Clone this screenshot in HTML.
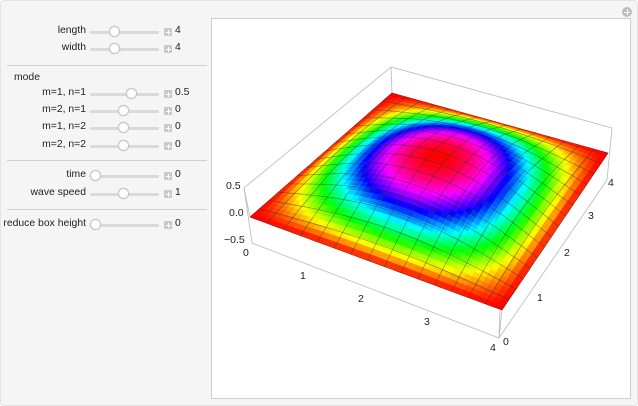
<!DOCTYPE html>
<html><head><meta charset="utf-8"><style>
body{margin:0;width:638px;height:406px;background:#fff;font-family:"Liberation Sans",Arial,sans-serif;font-size:10.4px;color:#222;overflow:hidden;position:relative}
.frame{position:absolute;left:0;top:0;width:636px;height:404px;background:#f5f5f5;border:1px solid #e4e4e4;border-radius:4px}
.plot{position:absolute;left:211px;top:18px;width:418px;height:379px;background:#fff;border:1px solid #cfcfcf}
.row{position:absolute;left:0;height:14px;width:210px}
.lab{position:absolute;right:124px;top:0;white-space:nowrap}
.trk{position:absolute;left:90px;top:6px;width:69px;height:3px;background:#dadada;border-radius:2px}
.knob{position:absolute;top:1px;width:11px;height:11px;border-radius:50%;background:#fff;border:1px solid #c6c6c6;box-sizing:border-box;box-shadow:0 0 1px #bbb}
.pl{position:absolute;left:164px;top:3px;width:8px;height:8px;background:#c9c9c9;border-radius:1px}
.pl:before{content:"";position:absolute;left:3.5px;top:1.5px;width:1px;height:5px;background:#fff}
.pl:after{content:"";position:absolute;left:1.5px;top:3.5px;width:5px;height:1px;background:#fff}
.val{position:absolute;left:175px;top:0}
.sep{position:absolute;left:7px;width:200px;height:1px;background:#cfcfcf}
.plus{position:absolute;left:622px;top:7px;width:10px;height:10px;border-radius:50%;background:#bdbdbd}
.plus:before{content:"";position:absolute;left:4.5px;top:2px;width:1px;height:6px;background:#fff}
.plus:after{content:"";position:absolute;left:2px;top:4.5px;width:6px;height:1px;background:#fff}
</style></head><body>
<div class="frame"></div>
<div class="plus"></div>
<div class="row" style="top:25px"><span class="lab">length</span><div class="trk"></div><div class="knob" style="left:109px"></div><div class="pl"></div><span class="val">4</span></div>
<div class="row" style="top:42px"><span class="lab">width</span><div class="trk"></div><div class="knob" style="left:109px"></div><div class="pl"></div><span class="val">4</span></div>
<div class="sep" style="top:65px"></div>
<div class="row" style="top:72px"><span style="position:absolute;left:14px">mode</span></div>
<div class="row" style="top:87px"><span class="lab">m=1, n=1</span><div class="trk"></div><div class="knob" style="left:126px"></div><div class="pl"></div><span class="val">0.5</span></div>
<div class="row" style="top:104px"><span class="lab">m=2, n=1</span><div class="trk"></div><div class="knob" style="left:118px"></div><div class="pl"></div><span class="val">0</span></div>
<div class="row" style="top:121px"><span class="lab">m=1, n=2</span><div class="trk"></div><div class="knob" style="left:118px"></div><div class="pl"></div><span class="val">0</span></div>
<div class="row" style="top:139px"><span class="lab">m=2, n=2</span><div class="trk"></div><div class="knob" style="left:118px"></div><div class="pl"></div><span class="val">0</span></div>
<div class="sep" style="top:160px"></div>
<div class="row" style="top:169px"><span class="lab">time</span><div class="trk"></div><div class="knob" style="left:90px"></div><div class="pl"></div><span class="val">0</span></div>
<div class="row" style="top:187px"><span class="lab">wave speed</span><div class="trk"></div><div class="knob" style="left:118px"></div><div class="pl"></div><span class="val">1</span></div>
<div class="sep" style="top:209px"></div>
<div class="row" style="top:218px"><span class="lab">reduce box height</span><div class="trk"></div><div class="knob" style="left:90px"></div><div class="pl"></div><span class="val">0</span></div>
<div class="plot"></div>
<svg id="s" width="638" height="406" style="position:absolute;left:0;top:0" font-family="Liberation Sans, Arial, sans-serif" font-size="10.5" fill="#222">
<g stroke="#b8b8b8" stroke-width="0.8" fill="none">
<polyline points="244,188 391,67 612,128"/>
<line x1="391" y1="67" x2="392" y2="93"/>
<line x1="244" y1="188" x2="252" y2="243"/>
<line x1="612" y1="128" x2="607" y2="180"/>
<polyline points="252,243 499,338 607,180"/>
<line x1="499" y1="338" x2="500" y2="310"/>
</g>
<g id="surf"></g>
<g stroke="#b8b8b8" stroke-width="0.8" fill="none">
<line x1="499" y1="338" x2="502" y2="310"/>
<line x1="244" y1="188" x2="250" y2="217"/>
</g>
<text x="226" y="189">0.5</text><text x="229" y="216">0.0</text><text x="224" y="243">−0.5</text>
<text x="243" y="256">0</text><text x="300" y="279">1</text><text x="358" y="302">2</text><text x="424" y="325">3</text><text x="490" y="351">4</text>
<text x="503" y="345">0</text><text x="537" y="301">1</text><text x="564" y="256">2</text><text x="588" y="219">3</text><text x="608" y="186">4</text>
</svg>
<script>
var C=[[250,217],[502,310],[608,153],[392,93]];
function P(x,y){var u=x/4,v=y/4;
var px=(1-u)*(1-v)*C[0][0]+u*(1-v)*C[1][0]+u*v*C[2][0]+(1-u)*v*C[3][0];
var py=(1-u)*(1-v)*C[0][1]+u*(1-v)*C[1][1]+u*v*C[2][1]+(1-u)*v*C[3][1];
var z=0.5*Math.sin(Math.PI*u)*Math.sin(Math.PI*v);
return [px,py-z*72,z];}
var N=44,q=[],h='';
for(var i=0;i<N;i++)for(var j=0;j<N;j++){var x0=4*i/N,x1=4*(i+1)/N,y0=4*j/N,y1=4*(j+1)/N;
var a=P(x0,y0),b=P(x1,y0),c=P(x1,y1),d=P(x0,y1);var zc=P((x0+x1)/2,(y0+y1)/2)[2];
q.push({d:(4-x0)+y0,s:[a,b,c,d],h:zc*2*360});}
q.sort(function(m,n){return n.d-m.d});
q.forEach(function(o){h+='<polygon points="'+o.s.map(function(p){return p[0].toFixed(1)+','+p[1].toFixed(1)}).join(' ')+'" fill="hsl('+o.h.toFixed(0)+',100%,50%)" stroke="hsl('+o.h.toFixed(0)+',100%,50%)" stroke-width="0.6"/>';});
var M=15;
for(var k=0;k<=M;k++){var t=4*k/M,p1=[],p2=[];for(var m=0;m<=40;m++){var s=4*m/40;var A=P(t,s),B=P(s,t);p1.push(A[0].toFixed(1)+','+A[1].toFixed(1));p2.push(B[0].toFixed(1)+','+B[1].toFixed(1));}
h+='<polyline fill="none" stroke="#333" stroke-opacity="0.6" stroke-width="0.6" points="'+p1.join(' ')+'"/><polyline fill="none" stroke="#333" stroke-opacity="0.6" stroke-width="0.6" points="'+p2.join(' ')+'"/>';}
document.getElementById('surf').innerHTML=h;
</script>
</body></html>
